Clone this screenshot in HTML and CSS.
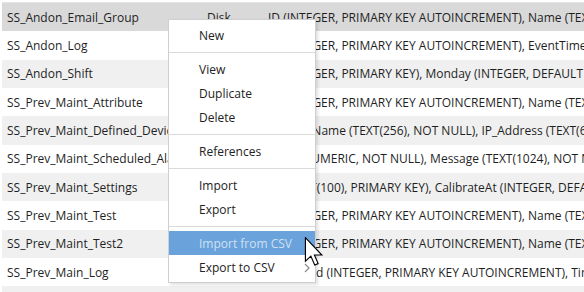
FILE: index.html
```html
<!DOCTYPE html>
<html>
<head>
<meta charset="utf-8">
<link rel="stylesheet" href="styles.css">
</head>
<body>
<div class="grid">
  <div class="top"></div>
  <div class="row selected"><div class="c1">SS_Andon_Email_Group</div><div class="c2">Disk</div><div class="c3">ID (INTEGER, PRIMARY KEY AUTOINCREMENT), Name (TEXT(256), NOT NULL)</div></div>
  <div class="row"><div class="c1">SS_Andon_Log</div><div class="c2">Disk</div><div class="c3">ID (INTEGER, PRIMARY KEY AUTOINCREMENT), EventTime (INTEGER, NOT NULL)</div></div>
  <div class="row alt"><div class="c1">SS_Andon_Shift</div><div class="c2">Disk</div><div class="c3">ID (INTEGER, PRIMARY KEY), Monday (INTEGER, DEFAULT 0)</div></div>
  <div class="row"><div class="c1">SS_Prev_Maint_Attribute</div><div class="c2">Disk</div><div class="c3">ID (INTEGER, PRIMARY KEY AUTOINCREMENT), Name (TEXT(256), NOT NULL)</div></div>
  <div class="row alt"><div class="c1">SS_Prev_Maint_Defined_Devices</div><div class="c2">Disk</div><div class="c3">ID(INT), Name (TEXT(256), NOT NULL), IP_Address (TEXT(64), NOT NULL)</div></div>
  <div class="row"><div class="c1">SS_Prev_Maint_Scheduled_Alarms</div><div class="c2">Disk</div><div class="c3">Time (NUMERIC, NOT NULL), Message (TEXT(1024), NOT NULL)</div></div>
  <div class="row alt"><div class="c1">SS_Prev_Maint_Settings</div><div class="c2">Disk</div><div class="c3">ID: (TEXT(100), PRIMARY KEY), CalibrateAt (INTEGER, DEFAULT 0)</div></div>
  <div class="row"><div class="c1">SS_Prev_Maint_Test</div><div class="c2">Disk</div><div class="c3">ID (INTEGER, PRIMARY KEY AUTOINCREMENT), Name (TEXT(256), NOT NULL)</div></div>
  <div class="row alt"><div class="c1">SS_Prev_Maint_Test2</div><div class="c2">Disk</div><div class="c3">ID (INTEGER, PRIMARY KEY AUTOINCREMENT), Name (TEXT(256), NOT NULL)</div></div>
  <div class="row"><div class="c1">SS_Prev_Main_Log</div><div class="c2">Disk</div><div class="c3">Record_Id (INTEGER, PRIMARY KEY AUTOINCREMENT), Timestamp (INTEGER)</div></div>
  <div class="row alt"><div class="c1"></div><div class="c2"></div><div class="c3"></div></div>
</div>

<div class="menu">
  <div class="item">New</div>
  <div class="sep"></div>
  <div class="item">View</div>
  <div class="item">Duplicate</div>
  <div class="item">Delete</div>
  <div class="sep"></div>
  <div class="item">References</div>
  <div class="sep"></div>
  <div class="item">Import</div>
  <div class="item">Export</div>
  <div class="sep"></div>
  <div class="item hot">Import from CSV</div>
  <div class="item">Export to CSV<span class="chev"><svg width="8" height="10" viewBox="0 0 8 10"><path d="M2 1 L6 5 L2 9" fill="none" stroke="#8a8a8a" stroke-width="1.2"/></svg></span></div>
</div>

<svg class="cursor" width="20" height="30" viewBox="0 0 13 21">
  <path d="M0.5 0.5 L0.5 17 L4.3 13.4 L7 19.6 L9.4 18.6 L6.8 12.6 L12 12.6 Z" fill="#fff" stroke="#000" stroke-width="0.8" stroke-linejoin="miter"/>
</svg>
</body>
</html>
```

FILE: styles.css
```css
html, body {
  margin: 0;
  padding: 0;
  background: #ffffff;
  width: 584px;
  height: 292px;
  overflow: hidden;
}
body {
  font-family: "Open Sans", "Noto Sans", sans-serif;
  font-size: 12px;
  color: #1f1f1f;
  position: relative;
}
.grid {
  display: flex;
  flex-direction: column;
  padding-left: 2px;
  height: 292px;
  overflow: hidden;
}
.top {
  height: 2px;
  flex: none;
  border-bottom: 1px solid #e4e4e4;
}
.row {
  display: flex;
  height: 28.33px;
  flex: none;
  align-items: center;
  background: #ffffff;
  white-space: nowrap;
  overflow: hidden;
}
.row.alt { background: #f0f0f0; }
.row.selected { background: #d9d9d9; }
.c1 {
  width: 200px;
  flex: none;
  padding-left: 5px;
  box-sizing: border-box;
  overflow: hidden;
}
.c2 {
  width: 61px;
  flex: none;
  padding-left: 5px;
  box-sizing: border-box;
  overflow: hidden;
}
.c3 {
  flex: none;
  padding-left: 5px;
}
.menu {
  position: absolute;
  left: 168px;
  top: 19px;
  width: 148px;
  box-sizing: border-box;
  background: #ffffff;
  border: 1px solid #cfcfcf;
  box-shadow: 2px 2px 3px rgba(0,0,0,0.12);
  padding: 3px 0;
  color: #222;
}
.item {
  height: 24px;
  display: flex;
  align-items: center;
  padding-left: 30px;
  position: relative;
}
.item.hot {
  background: #6aa2dc;
  color: #cfe0f2;
}
.sep {
  height: 1px;
  background: #dadada;
  margin: 5px 0 4px;
}
.chev {
  position: absolute;
  right: 4px;
  top: 8px;
  display: flex;
}
.cursor {
  position: absolute;
  left: 304px;
  top: 237px;
}
```
